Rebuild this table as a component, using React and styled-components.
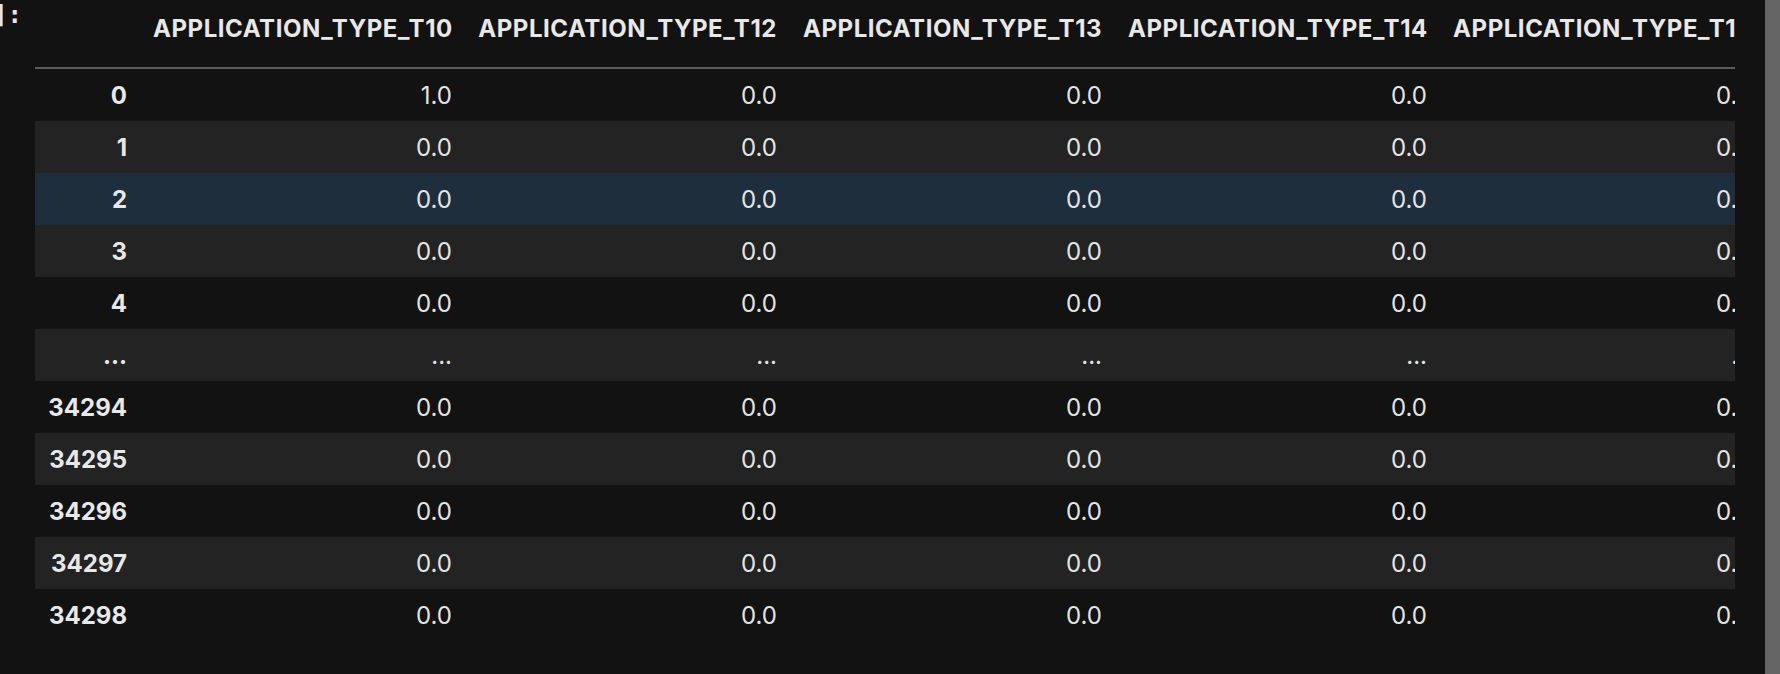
import styled, { createGlobalStyle } from "styled-components";

const GlobalStyle = createGlobalStyle`
  html, body {
    margin: 0;
    padding: 0;
    background: #121212;
  }
  body {
    font-family: Inter, "Liberation Sans", Arial, sans-serif;
    color: #e6e6e6;
  }
`;

const Page = styled.div`
  display: flex;
  height: 100vh;
  width: 100%;
  overflow: hidden;
  background: #121212;
`;

const Output = styled.div`
  display: flex;
  align-items: flex-start;
`;

// execution prompt, mostly scrolled out of view on the left
const Prompt = styled.div`
  display: flex;
  justify-content: flex-end;
  width: 35px;
  overflow: hidden;
  padding: 3px 13px 0 0;
  box-sizing: border-box;
  font-family: "DejaVu Sans Mono", "Liberation Mono", monospace;
  font-size: 24px;
  line-height: 24px;
  font-weight: 700;
  white-space: nowrap;
  color: #e6e6e6;
`;

const TableFrame = styled.div`
  width: 1700px;
  overflow: hidden;
`;

const Table = styled.table`
  table-layout: fixed;
  width: 1730px;
  border-collapse: separate;
  border-spacing: 0;
  font-size: 24px;
  line-height: 24px;
`;

const Col = styled.col`
  width: ${(p) => p.$w}px;
`;

const HeadCell = styled.th`
  padding: 17px 13px 26px;
  text-align: right;
  vertical-align: top;
  font-size: 24px;
  letter-spacing: 0.55px;
  font-weight: 700;
  white-space: nowrap;
  color: #e8e8e8;
  border-bottom: 2px solid #5c5c5c;
`;

const Row = styled.tr`
  background: ${(p) =>
    p.$active ? "#1f2e3c" : p.$striped ? "#232323" : "transparent"};
`;

const IndexCell = styled.th`
  padding: 15px 13px 13px;
  text-align: right;
  font-weight: 700;
  white-space: nowrap;
  color: #e8e8e8;
`;

const Cell = styled.td`
  padding: 15px 13px 13px;
  text-align: right;
  white-space: nowrap;
  color: #e4e4e4;
`;

const Scrollbar = styled.div`
  margin-left: auto;
  width: 15px;
  height: 100%;
  background: #646464;
`;

const columns = [
  "APPLICATION_TYPE_T10",
  "APPLICATION_TYPE_T12",
  "APPLICATION_TYPE_T13",
  "APPLICATION_TYPE_T14",
  "APPLICATION_TYPE_T15",
];

const rows = [
  { idx: "0", values: ["1.0", "0.0", "0.0", "0.0", "0.0"] },
  { idx: "1" },
  { idx: "2", active: true },
  { idx: "3" },
  { idx: "4" },
  { idx: "...", ellipsis: true },
  { idx: "34294" },
  { idx: "34295" },
  { idx: "34296" },
  { idx: "34297" },
  { idx: "34298" },
];

export default function App() {
  return (
    <Page>
      <GlobalStyle />
      <Output>
        <Prompt>Out[9]:</Prompt>
        <TableFrame>
          <Table>
            <colgroup>
              <Col $w={105} />
              {columns.map((c) => (
                <Col key={c} $w={325} />
              ))}
            </colgroup>
            <thead>
              <tr>
                <HeadCell />
                {columns.map((c) => (
                  <HeadCell key={c}>{c}</HeadCell>
                ))}
              </tr>
            </thead>
            <tbody>
              {rows.map((r, i) => (
                <Row key={r.idx} $striped={i % 2 === 1} $active={r.active}>
                  <IndexCell>{r.idx}</IndexCell>
                  {columns.map((c, j) => (
                    <Cell key={c}>
                      {r.ellipsis ? "..." : r.values ? r.values[j] : "0.0"}
                    </Cell>
                  ))}
                </Row>
              ))}
            </tbody>
          </Table>
        </TableFrame>
      </Output>
      <Scrollbar />
    </Page>
  );
}
